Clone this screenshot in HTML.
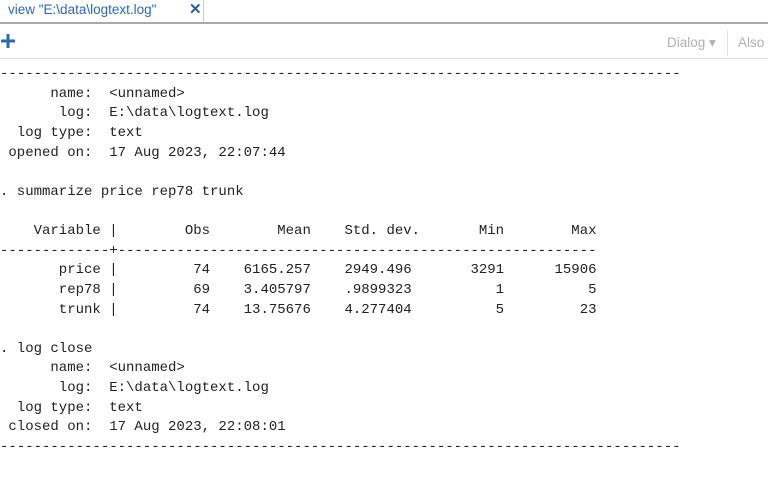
<!DOCTYPE html>
<html><head><style>
body{margin:0;width:768px;height:503px;background:#fff;overflow:hidden;position:relative;font-family:"Liberation Sans",sans-serif}
.tab{position:absolute;left:0;top:0;width:203px;height:22px;border-right:1px solid #ccc;}
.tab span{position:absolute;left:8px;top:2px;font-size:13.5px;color:#2f6aa8}
.x{position:absolute;left:189px;top:0px;font-size:15px;font-weight:bold;color:#2f5f9a}
.bar1{position:absolute;left:0;top:22px;width:768px;height:2px;background:#aaa}
.bar2{position:absolute;left:0;top:58px;width:768px;height:1px;background:#ddd}
.plus{position:absolute;left:0;top:33px;}
.dlg{position:absolute;left:667px;top:35px;font-size:13.5px;color:#b0b0b0}
.sep{position:absolute;left:727px;top:30px;width:1px;height:26px;background:#e3e3e3}
.also{position:absolute;left:738px;top:35px;font-size:13.5px;color:#b0b0b0}
pre{position:absolute;left:0;top:65px;margin:0;font-family:"Liberation Mono",monospace;font-size:14px;line-height:19.63px;color:#222}
</style></head><body>
<div class="tab"><span>view "E:\data\logtext.log"</span><div class="x">✕</div></div>
<div class="bar1"></div>
<svg class="plus" width="16" height="16"><path d="M8 1V15M1 8H15" stroke="#2f6aa8" stroke-width="3"/></svg>
<div class="dlg">Dialog ▾</div><div class="sep"></div><div class="also">Also</div>
<div class="bar2"></div>
<pre>---------------------------------------------------------------------------------
      name:  &lt;unnamed&gt;
       log:  E:\data\logtext.log
  log type:  text
 opened on:  17 Aug 2023, 22:07:44

. summarize price rep78 trunk

    Variable |        Obs        Mean    Std. dev.       Min        Max
-------------+---------------------------------------------------------
       price |         74    6165.257    2949.496       3291      15906
       rep78 |         69    3.405797    .9899323          1          5
       trunk |         74    13.75676    4.277404          5         23

. log close
      name:  &lt;unnamed&gt;
       log:  E:\data\logtext.log
  log type:  text
 closed on:  17 Aug 2023, 22:08:01
---------------------------------------------------------------------------------</pre>
</body></html>
